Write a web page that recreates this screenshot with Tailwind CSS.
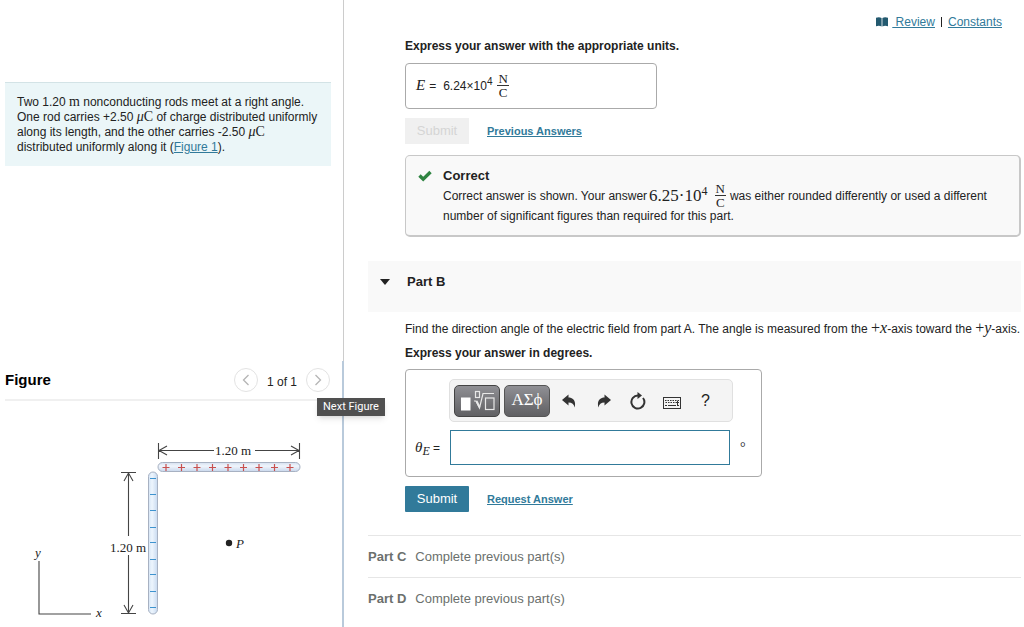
<!DOCTYPE html>
<html lang="en">
<head>
  <meta charset="UTF-8" />
  <meta name="viewport" content="width=device-width, initial-scale=1.0"/>
  <title>Electric Field of Two Rods</title>
  <script src="https://cdn.jsdelivr.net/npm/@tailwindcss/browser@4"></script>
</head>
<body class="bg-white font-['Liberation_Sans',Arial,sans-serif] text-xs text-[#222]">
  <div class="flex min-h-screen">

    <!-- Problem and figure -->
    <aside class="w-[344px] shrink-0 flex flex-col">
      <section class="h-[361px] border-r border-[#ccc] pt-[82px] pl-[5px] pr-3">
        <div class="bg-[#ebf6f8] border-t border-[#d3e3e6] px-3 py-3 h-[84px] leading-[15px] whitespace-nowrap">
          Two 1.20 <span class="font-['Liberation_Serif',serif] text-sm leading-none">m</span> nonconducting rods meet at a right angle.<br>
          One rod carries +2.50 <span class="font-['Liberation_Serif',serif] text-sm leading-none"><i>μ</i>C</span> of charge distributed uniformly<br>
          along its length, and the other carries -2.50 <span class="font-['Liberation_Serif',serif] text-sm leading-none"><i>μ</i>C</span><br>
          distributed uniformly along it (<a href="#figure" class="text-[#317a9a] underline">Figure 1</a>).
        </div>
      </section>

      <section id="figure" class="flex-1 border-r-2 border-[#b9cadb] pl-[5px]">
        <div class="flex items-center h-[40px] border-b-2 border-[#f0f0f0] pr-3">
          <h2 class="font-bold text-[15px] text-black flex-1">Figure</h2>
          <div class="flex items-center gap-2">
            <button type="button" aria-label="Previous Figure" class="w-6 h-6 rounded-full border border-[#e3e3e3] flex items-center justify-center">
              <svg width="8" height="12" viewBox="0 0 8 12" fill="none" stroke="#b5b5b5" stroke-width="1.3"><path d="M6.5 1 1.5 6l5 5"/></svg>
            </button>
            <span class="text-xs pt-1 px-px">1 of 1</span>
            <div class="relative">
              <button type="button" aria-describedby="next-tip" aria-label="Next Figure" class="w-6 h-6 rounded-full border border-[#e3e3e3] flex items-center justify-center">
                <svg width="8" height="12" viewBox="0 0 8 12" fill="none" stroke="#b5b5b5" stroke-width="1.3"><path d="m1.5 1 5 5-5 5"/></svg>
              </button>
              <div id="next-tip" role="tooltip" class="absolute z-10 top-[30px] left-[11px] h-[18px] px-[6px] bg-[#505050] text-white text-[11px] leading-[18px] font-[Roboto,sans-serif] whitespace-nowrap shadow-md">Next Figure</div>
            </div>
          </div>
        </div>
        <svg class="block mt-7" width="320" height="196" viewBox="5 429 320 196" font-family="Liberation Serif, serif" font-size="13" fill="#222">
          <defs>
            <linearGradient id="rod-h" x1="0" y1="0" x2="0" y2="1"><stop offset="0" stop-color="#d5e0f0"/><stop offset=".4" stop-color="#f0f5fc"/><stop offset="1" stop-color="#c8d7ec"/></linearGradient>
            <linearGradient id="rod-v" x1="0" y1="0" x2="1" y2="0"><stop offset="0" stop-color="#d5e4f5"/><stop offset=".4" stop-color="#edf5fd"/><stop offset="1" stop-color="#c8daf0"/></linearGradient>
          </defs>
          <!-- dimension lines -->
          <g fill="none" stroke="#444" stroke-width="1.1">
            <path d="M158.500 443v16M299.500 443v16M159 450.500h55M255 450.500h44M167 446l-8 4.500 8 4.500M291 446l8 4.500-8 4.500"/>
            <path d="M121 472.500h15M121 613.500h15M128.500 473v63M128.500 555v58M124 481l4.500-8 4.500 8M124 605l4.500 8 4.500-8"/>
            <path d="M39 561v53h52"/>
          </g>
          <text x="215" y="455">1.20 m</text>
          <text x="110" y="552">1.20 m</text>
          <rect x="158" y="462.500" width="142" height="9" rx="4.500" fill="url(#rod-h)" stroke="#a7b1c2"/>
          <rect x="148.500" y="472" width="9" height="142" rx="4.500" fill="url(#rod-v)" stroke="#a7b1c2"/>
          <path stroke="#c8504f" stroke-width="1.200" d="M162.500 467.500h7m-3.500-3.500v7M178 467.500h7m-3.500-3.500v7M193.500 467.500h7m-3.500-3.500v7M209 467.500h7m-3.500-3.500v7M224.500 467.500h7m-3.500-3.500v7M240 467.500h7m-3.500-3.500v7M255.500 467.500h7m-3.500-3.500v7M271 467.500h7m-3.500-3.500v7M286.500 467.500h7m-3.500-3.500v7"/>
          <path stroke="#3d93cf" stroke-width="1.200" d="M150 478.500h6M150 494.500h6M150 510.500h6M150 527.500h6M150 542.500h6M150 559.500h6M150 574.500h6M150 591.500h6M150 607.500h6"/>
          <circle cx="229" cy="543" r="3.200"/>
          <g font-style="italic">
            <text x="236" y="548">P</text>
            <text x="35" y="557">y</text>
            <text x="96" y="617">x</text>
          </g>
        </svg>
      </section>
    </aside>

    <!-- Answer parts -->
    <main class="flex-1 min-w-0 pl-6 pr-[3px] pt-3">
      <nav class="flex justify-end items-center h-5 pr-[19px]">
        <svg width="12" height="10" viewBox="0 0 12 10" fill="#23596f"><path d="M0 .8C2 0 4 0 5.600 1v8.500C4 8.500 2 8.500 0 9.200zM12 .8C10 0 8 0 6.400 1v8.500C8 8.500 10 8.500 12 9.200z"/></svg>
        <a href="#review" class="text-[#317a9a] underline whitespace-pre ml-1"> Review</a>
        <span class="mx-[6px] w-px h-[10px] bg-[#222]"></span>
        <a href="#constants" class="text-[#317a9a] underline">Constants</a>
      </nav>

      <section class="pl-[37px]">
        <h3 class="font-bold leading-5 mt-1">Express your answer with the appropriate units.</h3>
        <div class="mt-[7px] w-[252px] h-[46px] border border-[#aaa] rounded-[4px] flex items-center pl-[10px]">
          <i class="font-['Liberation_Serif',serif] text-[15px]">E</i>
          <span class="ml-1">=</span>
          <span class="ml-[7px]">6.24×10<sup class="text-[10px]">4</sup></span>
          <span class="ml-[5px] pb-[2px] inline-flex flex-col items-center font-['Liberation_Serif',serif] text-[13px] leading-[13px]">
            <span class="border-b border-[#333] px-px">N</span><span>C</span>
          </span>
        </div>
        <div class="flex items-center mt-[9px]">
          <button type="button" disabled class="w-16 h-[26px] bg-[#f0f0f0] text-[#d5d5d5] text-[13px]">Submit</button>
          <a href="#previous" class="ml-[18px] font-bold text-[11px] text-[#317a9a] underline">Previous Answers</a>
        </div>
        <div class="mt-[11px] h-[82px] bg-[#f9f9f9] border border-[#c8c8c8] border-b-2 border-r-2 rounded-[5px] flex pt-[10px] pl-3">
          <svg class="mt-1 shrink-0" width="14" height="12" viewBox="0 0 14 12" fill="none" stroke="#2f8442" stroke-width="3.400"><path d="M1.500 5.500l3.700 3.700L12.500 2"/></svg>
          <div class="ml-[11px] leading-5 whitespace-nowrap">
            <h4 class="font-bold text-[13px] leading-5">Correct</h4>
            <div class="flex items-center h-5">
              <span>Correct answer is shown. Your answer</span>
              <span class="ml-[2px] font-['Liberation_Serif',serif] text-[17px]">6.25·10<sup class="text-xs">4</sup></span>
              <span class="ml-[7px] mr-1 pb-[2px] inline-flex flex-col items-center font-['Liberation_Serif',serif] text-[13px] leading-[13px]">
                <span class="border-b border-[#333] px-px">N</span><span>C</span>
              </span>
              <span>was either rounded differently or used a different</span>
            </div>
            <p>number of significant figures than required for this part.</p>
          </div>
        </div>
      </section>

      <button type="button" class="mt-6 w-full h-[51px] bg-[#f9f9f9] flex items-start pt-[11px] pl-3 text-left">
        <svg class="mt-[7px]" width="10" height="6" viewBox="0 0 10 6" fill="#222"><path d="M0 0h10L5 6z"/></svg>
        <span class="ml-[17px] font-bold text-[13px] leading-5">Part B</span>
      </button>

      <section class="pl-[37px]">
        <p class="mt-[7px] leading-5 whitespace-nowrap">Find the direction angle of the electric field from part A. The angle is measured from the <span class="font-['Liberation_Serif',serif] text-base leading-none">+<i>x</i></span>-axis toward the <span class="font-['Liberation_Serif',serif] text-base leading-none">+<i>y</i></span>-axis.</p>
        <h3 class="mt-1 font-bold leading-5">Express your answer in degrees.</h3>
        <div class="mt-[6px] w-[357px] h-[108px] border border-[#aaa] rounded-[4px] pt-[9px] pl-[9px]">
          <div class="ml-[34px] w-[284px] h-[43px] bg-[#f4f4f4] border border-[#e0e0e0] rounded-[5px] flex items-center pl-1">
            <button type="button" aria-label="Templates" class="w-[46px] h-8 rounded-[5px] border border-[#444] bg-linear-to-b from-[#909095] to-[#606063] flex items-center justify-center">
              <svg width="36" height="22" viewBox="0 0 36 22" fill="none" stroke="#e8e8e8" stroke-width="1.200"><rect x="2" y="7.500" width="9.500" height="13" fill="#fff" stroke="none"/><path d="M15 11h2l3.500 7L24 3.500h11"/><path d="M17.500 11l3 6" stroke-width="2"/><rect x="16.500" y="1.500" width="4" height="6"/><rect x="26.500" y="8" width="8.500" height="11.500"/></svg>
            </button>
            <button type="button" class="ml-1 w-[46px] h-8 rounded-[5px] border border-[#555] bg-linear-to-b from-[#909095] to-[#606063] text-white font-['Liberation_Serif',serif] text-[17px]">ΑΣϕ</button>
            <button type="button" aria-label="Undo" class="ml-3">
              <svg width="14" height="14" viewBox="0 0 14 14" fill="#333"><path d="M0 6 6.500.5v3C11 3.500 14.500 7 12.500 13.500 12 10 10 8.500 6.500 8.500v3z"/></svg>
            </button>
            <button type="button" aria-label="Redo" class="ml-[21px]">
              <svg width="14" height="14" viewBox="0 0 14 14" fill="#333"><path d="M14 6 7.500.5v3C3 3.500-.5 7 1.500 13.500 2 10 4 8.500 7.500 8.500v3z"/></svg>
            </button>
            <button type="button" aria-label="Reset" class="ml-[18px]">
              <svg width="18" height="18" viewBox="0 0 18 18"><path d="M9 3.500A6.500 6.500 0 1 0 14 6" fill="none" stroke="#333" stroke-width="2"/><path d="M8.500 0 13 3.500 8.500 7z" fill="#333"/></svg>
            </button>
            <button type="button" aria-label="Keyboard shortcuts" class="ml-4 pt-1">
              <svg width="18" height="12" viewBox="0 0 18 12" fill="none" stroke="#333"><rect x=".5" y=".5" width="17" height="11"/><path d="M2 3.500h14M2.500 5.500h13.500" stroke-dasharray="1.500 1"/><path d="M2 8.500h2M5 8.500h8M14 8.500h2M14.500 4v4"/></svg>
            </button>
            <button type="button" aria-label="Help" class="ml-5 text-base">?</button>
          </div>
          <div class="mt-2 flex items-center h-[35px]">
            <label for="theta" class="w-[35px] whitespace-nowrap"><i class="font-['Liberation_Serif',serif] text-[15px]">θ<sub class="text-xs">E</sub></i> =</label>
            <input id="theta" type="text" class="w-[280px] h-[35px] border border-[#317a9a] bg-white px-2 outline-none">
            <span class="ml-[10px] font-['Liberation_Serif',serif] text-sm">°</span>
          </div>
        </div>
        <div class="flex items-center mt-[9px]">
          <button type="submit" class="w-16 h-[26px] bg-[#317a9a] text-white text-[13px] rounded-[1px]">Submit</button>
          <a href="#request" class="ml-[18px] font-bold text-[11px] text-[#317a9a] underline">Request Answer</a>
        </div>
      </section>

      <ul class="mt-[23px] text-[13px] text-[#6b706d]">
        <li class="h-[42px] border-t border-[#e6e6e6] flex items-center gap-[9px]"><b>Part C</b><span>Complete previous part(s)</span></li>
        <li class="h-[42px] border-t border-[#e6e6e6] flex items-center gap-[9px]"><b>Part D</b><span>Complete previous part(s)</span></li>
      </ul>
    </main>
  </div>
</body>
</html>
